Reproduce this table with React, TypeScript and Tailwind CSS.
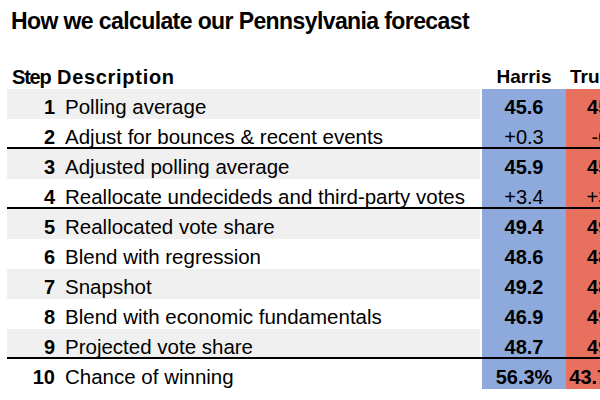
type Row = {
  step: number;
  label: string;
  harris: string;
  trump: string;
  strong: boolean;
  shade: boolean;
  rule?: boolean;
};

const ROWS: Row[] = [
  { step: 1, label: 'Polling average', harris: '45.6', trump: '45.3', strong: true, shade: true },
  { step: 2, label: 'Adjust for bounces & recent events', harris: '+0.3', trump: '-0.2', strong: false, shade: false, rule: true },
  { step: 3, label: 'Adjusted polling average', harris: '45.9', trump: '45.1', strong: true, shade: true },
  { step: 4, label: 'Reallocate undecideds and third-party votes', harris: '+3.4', trump: '+3.9', strong: false, shade: false, rule: true },
  { step: 5, label: 'Reallocated vote share', harris: '49.4', trump: '49.0', strong: true, shade: true },
  { step: 6, label: 'Blend with regression', harris: '48.6', trump: '48.8', strong: true, shade: false },
  { step: 7, label: 'Snapshot', harris: '49.2', trump: '48.9', strong: true, shade: true },
  { step: 8, label: 'Blend with economic fundamentals', harris: '46.9', trump: '49.8', strong: true, shade: false },
  { step: 9, label: 'Projected vote share', harris: '48.7', trump: '49.0', strong: true, shade: true, rule: true },
  { step: 10, label: 'Chance of winning', harris: '56.3%', trump: '43.7%', strong: true, shade: false },
];

function TableRow({ row }: { row: Row }) {
  return (
    <div className={`flex h-[30px] ${row.rule ? 'border-b-2 border-black' : ''}`}>
      <div className={`flex w-[473px] shrink-0 pt-[8px] ${row.shade ? 'bg-[#f0f0f0]' : ''}`}>
        <div className="w-[48px] shrink-0 text-right font-bold">{row.step}</div>
        <div className="pl-[10px] text-[20.5px] whitespace-nowrap">{row.label}</div>
      </div>
      <div className="w-[2px] shrink-0" />
      <div
        className={`w-[84px] shrink-0 bg-[#8eaadc] pt-[8px] text-center ${row.strong ? 'font-bold' : ''}`}
      >
        {row.harris}
      </div>
      {/* trump column sits past the crop; right-aligned so only the lead digit shows */}
      <div
        className={`w-[84px] shrink-0 bg-[#e8705f] pt-[8px] pr-[24px] text-right ${row.strong ? 'font-bold' : ''}`}
      >
        {row.trump}
      </div>
    </div>
  );
}

export default function App() {
  return (
    <div className="h-[400px] w-[600px] overflow-hidden bg-white font-['Liberation_Sans',Arial,sans-serif] text-black">
      <h1 className="pt-[9px] pl-[11px] text-[23px] leading-[24px] font-bold tracking-[-0.6px] whitespace-nowrap">
        How we calculate our Pennsylvania forecast
      </h1>
      <div className="mt-[34px] w-[660px] pl-[7px] text-[20px] leading-[20px]">
        <div className="flex h-[22px] font-bold whitespace-nowrap">
          <div className="w-[50px] shrink-0 pl-[5px] tracking-[-1.2px]">Step</div>
          <div className="w-[423px] shrink-0 tracking-[0.7px]">Description</div>
          <div className="w-[2px] shrink-0" />
          <div className="w-[84px] shrink-0 text-center text-[19px]">Harris</div>
          <div className="w-[84px] shrink-0 pl-[4px] text-[19px]">Trump</div>
        </div>
        {ROWS.map((r) => (
          <TableRow key={r.step} row={r} />
        ))}
      </div>
    </div>
  );
}
